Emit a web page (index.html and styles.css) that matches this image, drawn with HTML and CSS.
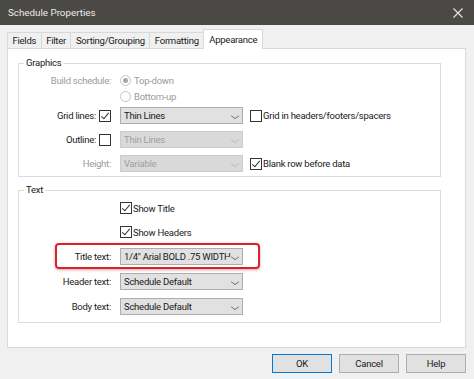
FILE: index.html
```html
<!DOCTYPE html>
<html lang="en">
<head>
<meta charset="utf-8">
<title>Schedule Properties</title>
<link rel="stylesheet" href="styles.css">
</head>
<body>
<div class="dialog">
  <div class="titlebar">
    <span class="title">Schedule Properties</span>
    <svg class="close" width="10" height="10" viewBox="0 0 10 10"><path d="M0.5 0.5L9.5 9.5M9.5 0.5L0.5 9.5" stroke="#e8e8e8" stroke-width="1.1"/></svg>
  </div>

  <div class="tabs">
    <span class="tab">Fields</span>
    <span class="tab">Filter</span>
    <span class="tab">Sorting/Grouping</span>
    <span class="tab">Formatting</span>
    <span class="tab active">Appearance</span>
  </div>

  <div class="panel">
    <fieldset class="group">
      <legend>Graphics</legend>
      <div class="row short">
        <span class="label dim">Build schedule:</span>
        <span class="radio dim"><i class="dot on"></i>Top-down</span>
      </div>
      <div class="row short">
        <span class="label"></span>
        <span class="radio dim"><i class="dot"></i>Bottom-up</span>
      </div>
      <div class="row first">
        <span class="label">Grid lines: <i class="check on"></i></span>
        <div class="select">Thin Lines<i class="chev"></i></div>
        <span class="extra"><i class="check"></i>Grid in headers/footers/spacers</span>
      </div>
      <div class="row">
        <span class="label">Outline: <i class="check"></i></span>
        <div class="select off">Thin Lines<i class="chev"></i></div>
      </div>
      <div class="row">
        <span class="label dim">Height:</span>
        <div class="select off">Variable<i class="chev"></i></div>
        <span class="extra"><i class="check on"></i>Blank row before data</span>
      </div>
    </fieldset>

    <fieldset class="group text-group">
      <legend>Text</legend>
      <div class="row short opt">
        <span class="label"></span>
        <span class="extra"><i class="check on"></i>Show Title</span>
      </div>
      <div class="row short opt">
        <span class="label"></span>
        <span class="extra"><i class="check on"></i>Show Headers</span>
      </div>
      <div class="row marked">
        <span class="label">Title text:</span>
        <div class="select">1/4" Arial BOLD .75 WIDTH<i class="chev"></i></div>
        <span class="callout"></span>
      </div>
      <div class="row">
        <span class="label">Header text:</span>
        <div class="select">Schedule Default<i class="chev"></i></div>
      </div>
      <div class="row">
        <span class="label">Body text:</span>
        <div class="select">Schedule Default<i class="chev"></i></div>
      </div>
    </fieldset>
  </div>

  <div class="buttons">
    <span class="btn default">OK</span>
    <span class="btn">Cancel</span>
    <span class="btn">Help</span>
  </div>
</div>
</body>
</html>
```

FILE: styles.css
```css
body {
  margin: 0;
  font-family: Roboto, "Noto Sans", sans-serif;
  font-size: 9.5px;
  letter-spacing: -0.25px;
  color: #1a1a1a;
}

.dialog {
  width: 474px;
  height: 379px;
  background: #f0f0f0;
  overflow: hidden;
}

.titlebar {
  height: 25px;
  background: #4a4946;
  color: #ececec;
  display: flex;
  align-items: center;
  justify-content: space-between;
  padding: 0 11px 0 8px;
  font-size: 9.8px;
  letter-spacing: 0;
}

.tabs {
  display: flex;
  align-items: flex-end;
  height: 20px;
  padding: 4px 0 0 7px;
  margin-bottom: -1px;
  position: relative;
  z-index: 1;
}

.tab {
  height: 17px;
  line-height: 16px;
  padding: 0 4.5px;
  border: 1px solid #d9d9d9;
  border-bottom: none;
  margin-right: -1px;
  box-sizing: border-box;
}

.tab.active {
  height: 20px;
  line-height: 19px;
  background: #fff;
  padding: 0 5px;
}

.panel {
  height: 300px;
  box-sizing: border-box;
  margin: 0 8px 0 7px;
  background: #fff;
  border: 1px solid #d9d9d9;
  padding: 7px 24px 0 10px;
}

/* group boxes */
.group {
  margin: 0;
  min-width: 0;
  border: 1px solid #dcdcdc;
  padding: 2px 0 4px 0;
}

.group legend {
  margin-left: 5px;
  padding: 0 2px;
  line-height: 14px;
}

.text-group {
  margin-top: 6px;
  padding: 3px 0 7px 0;
}

.row {
  display: flex;
  align-items: center;
  height: 17px;
  margin-top: 7px;
  position: relative;
}

.row.short {
  height: 16px;
  margin-top: 0;
}

.row.first {
  margin-top: 3px;
}

.row.opt + .row.opt {
  margin-top: 8px;
}

.row.opt + .row:not(.opt),
.text-group .row + .row:not(.opt) {
  margin-top: 8px;
}

.label {
  width: 92px;
  flex: none;
  display: flex;
  justify-content: flex-end;
  align-items: center;
  gap: 3px;
}

.dim {
  color: #9a9a9a;
}

.radio {
  display: flex;
  align-items: center;
  margin-left: 9px;
}

.dot {
  width: 11px;
  height: 11px;
  box-sizing: border-box;
  border: 1px solid #c4c4c4;
  border-radius: 50%;
  margin-right: 3px;
  position: relative;
}

.dot.on:after {
  content: "";
  position: absolute;
  left: 2px;
  top: 2px;
  width: 5px;
  height: 5px;
  border-radius: 50%;
  background: #a8a8a8;
}

.check {
  width: 12px;
  height: 12px;
  box-sizing: border-box;
  border: 1px solid #333;
  background: #fff;
  flex: none;
  position: relative;
}

.check.on:after {
  content: "";
  position: absolute;
  left: 3px;
  top: 0px;
  width: 3px;
  height: 7px;
  border: solid #333;
  border-width: 0 1px 1px 0;
  transform: rotate(40deg);
}

.select {
  width: 123px;
  height: 17px;
  box-sizing: border-box;
  margin-left: 9px;
  background: #e1e1e1;
  border: 1px solid #adadad;
  padding-left: 3px;
  line-height: 15px;
  white-space: nowrap;
  overflow: hidden;
  position: relative;
  flex: none;
}

.select.off {
  background: #d9d9d9;
  border-color: #cccccc;
  color: #a0a0a0;
}

.chev {
  position: absolute;
  right: 4px;
  top: 5px;
  width: 5px;
  height: 5px;
  border: solid #707070;
  border-width: 0 1px 1px 0;
  transform: scaleY(0.7) rotate(45deg);
  background: #e1e1e1;
  box-shadow: 3px 3px 0 4px #e1e1e1;
}

.select.off .chev {
  border-color: #bdbdbd;
  background: #d9d9d9;
  box-shadow: 3px 3px 0 4px #d9d9d9;
}

.extra {
  display: flex;
  align-items: center;
  gap: 1px;
  margin-left: 7px;
}

.row.opt .extra {
  margin-left: 9px;
}

/* red annotation around the title text row */
.callout {
  position: absolute;
  left: 36px;
  top: -5px;
  width: 205px;
  height: 26px;
  box-sizing: border-box;
  border: 2.5px solid #d8232b;
  border-radius: 4px;
  box-shadow: 0 1px 3px rgba(120, 0, 0, 0.35);
}

.buttons {
  display: flex;
  justify-content: flex-end;
  gap: 7px;
  padding: 6px 8px 0 0;
}

.btn {
  width: 60px;
  height: 19px;
  box-sizing: border-box;
  border: 1px solid #adadad;
  background: #e1e1e1;
  text-align: center;
  line-height: 17px;
}

.btn.default {
  border-color: #0078d7;
}
```
